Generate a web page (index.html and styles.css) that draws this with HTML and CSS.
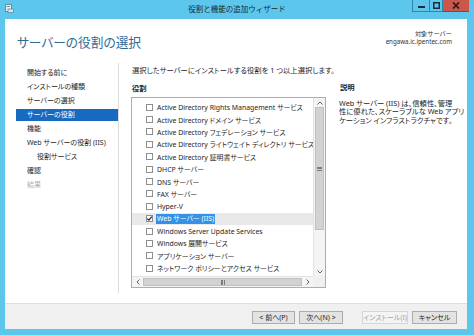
FILE: index.html
```
<!doctype html>
<html lang="ja">
<head>
  <meta charset="utf-8">
  <title>役割と機能の追加ウィザード</title>
  <link rel="stylesheet" href="styles.css">
</head>
<body>
  <div class="window">
    <div class="titlebar">
      <div class="tb-left">
        <svg class="app-icon" width="9" height="9" viewBox="0 0 9 9">
          <rect x="0.5" y="0.5" width="6" height="7" fill="#e8f4fb" stroke="#6f8796"/>
          <rect x="3" y="5" width="5.5" height="3.5" fill="#d6e6f0" stroke="#6f8796" stroke-width="0.8"/>
          <line x1="1.5" y1="2.5" x2="5" y2="2.5" stroke="#6f8796"/>
        </svg>
      </div>
      <div class="tb-title">役割と機能の追加ウィザード</div>
      <div class="tb-controls">
        <span class="tb-btn tb-min"><svg width="7" height="7" viewBox="0 0 7 7"><rect x="0" y="4" width="7" height="2" fill="#1d2b33"/></svg></span>
        <span class="tb-btn tb-max"><svg width="7" height="7" viewBox="0 0 7 7"><rect x="0.75" y="0.75" width="5.5" height="5.5" fill="none" stroke="#1d2b33" stroke-width="1.5"/></svg></span>
        <span class="tb-btn tb-close"><svg width="8" height="7" viewBox="0 0 8 7"><path d="M1 0.5 L7 6.5 M7 0.5 L1 6.5" stroke="#2a1414" stroke-width="1.6"/></svg></span>
      </div>
    </div>

    <div class="client">
      <div class="header">
        <h1>サーバーの役割の選択</h1>
        <div class="target">
          <div>対象サーバー</div>
          <div>engawa.ic.ipentec.com</div>
        </div>
      </div>

      <div class="main">
        <ul class="nav">
          <li>開始する前に</li>
          <li>インストールの種類</li>
          <li>サーバーの選択</li>
          <li class="active">サーバーの役割</li>
          <li>機能</li>
          <li>Web サーバーの役割 (IIS)</li>
          <li class="sub">役割サービス</li>
          <li>確認</li>
          <li class="disabled">結果</li>
        </ul>

        <div class="content">
          <p class="intro">選択したサーバーにインストールする役割を 1 つ以上選択します。</p>
          <div class="label">役割</div>
          <div class="listbox">
            <div class="items">
              <div class="row"><span class="cb"></span><span class="txt">Active Directory Rights Management サービス</span></div>
              <div class="row"><span class="cb"></span><span class="txt">Active Directory ドメイン サービス</span></div>
              <div class="row"><span class="cb"></span><span class="txt">Active Directory フェデレーション サービス</span></div>
              <div class="row"><span class="cb"></span><span class="txt">Active Directory ライトウェイト ディレクトリ サービス</span></div>
              <div class="row"><span class="cb"></span><span class="txt">Active Directory 証明書サービス</span></div>
              <div class="row"><span class="cb"></span><span class="txt">DHCP サーバー</span></div>
              <div class="row"><span class="cb"></span><span class="txt">DNS サーバー</span></div>
              <div class="row"><span class="cb"></span><span class="txt">FAX サーバー</span></div>
              <div class="row"><span class="cb"></span><span class="txt">Hyper-V</span></div>
              <div class="row selected"><span class="cb checked"><svg width="7" height="7" viewBox="0 0 7 7"><path d="M1.2 3.6 L2.9 5.2 L5.8 1.6" fill="none" stroke="#222" stroke-width="1.2"/></svg></span><span class="txt">Web サーバー (IIS)</span></div>
              <div class="row"><span class="cb"></span><span class="txt">Windows Server Update Services</span></div>
              <div class="row"><span class="cb"></span><span class="txt">Windows 展開サービス</span></div>
              <div class="row"><span class="cb"></span><span class="txt">アプリケーション サーバー</span></div>
              <div class="row"><span class="cb"></span><span class="txt">ネットワーク ポリシーとアクセス サービス</span></div>
              <div class="row partial"><span class="expander">▸</span><span class="cb mixed"></span><span class="txt">ファイル サービスおよびストレージ サービス (2/12 個をインストール済み)</span></div>
            </div>
            <div class="vscroll">
              <span class="arrow"><svg width="6" height="4" viewBox="0 0 6 4"><path d="M0.5 3.5 L3 1 L5.5 3.5" fill="none" stroke="#606060"/></svg></span>
              <span class="vthumb"><span class="grip-h"></span></span>
              <span class="track"></span>
              <span class="arrow"><svg width="6" height="4" viewBox="0 0 6 4"><path d="M0.5 0.5 L3 3 L5.5 0.5" fill="none" stroke="#606060"/></svg></span>
            </div>
            <div class="hscroll">
              <span class="arrow"><svg width="4" height="6" viewBox="0 0 4 6"><path d="M3.5 0.5 L1 3 L3.5 5.5" fill="none" stroke="#606060"/></svg></span>
              <span class="hthumb"><span class="grip-v"></span></span>
              <span class="arrow"><svg width="4" height="6" viewBox="0 0 4 6"><path d="M0.5 0.5 L3 3 L0.5 5.5" fill="none" stroke="#606060"/></svg></span>
            </div>
            <div class="corner"></div>
          </div>
        </div>

        <div class="desc">
          <div class="label">説明</div>
          <p>Web サーバー (IIS) は、信頼性、管理<br>性に優れた、スケーラブルな Web アプリ<br>ケーション インフラストラクチャです。</p>
        </div>
      </div>

      <div class="footer">
        <button>&lt; 前へ(P)</button>
        <button>次へ(N) &gt;</button>
        <button class="install" disabled>インストール(I)</button>
        <button>キャンセル</button>
      </div>
    </div>
  </div>
</body>
</html>
```

FILE: styles.css
```
html,body{margin:0;padding:0}
body{width:474px;height:335px;overflow:hidden;background:#5cc6ec;font-family:"Noto Sans","Noto Sans CJK JP",sans-serif;font-size:7.3px;color:#1e1e1e}
.window{display:flex;flex-direction:column;height:335px}

.titlebar{height:19px;display:grid;grid-template-columns:1fr auto 1fr;align-items:start}
.tb-left{padding:4px 0 0 5px;height:15px}
.app-icon{display:block}
.tb-title{font-family:"Noto Sans CJK JP",sans-serif;font-size:7.5px;line-height:17px;color:#1b2a33}
.tb-controls{justify-self:end;display:flex;margin-right:5px}
.tb-btn{display:flex;align-items:center;justify-content:center;height:12px;box-sizing:border-box}
.tb-min{width:17px;border:1px solid #2f87ad;border-top:0;border-right:0}
.tb-max{width:14px;border:1px solid #2f87ad;border-top:0}
.tb-close{width:26px;background:#c9574a;border-bottom:1px solid #a23a2f}

.client{flex:1;margin:0 7px 6px 5px;background:#fff;display:flex;flex-direction:column}

.header{height:44px;display:flex;justify-content:space-between;align-items:flex-start}
.header h1{margin:14px 0 0 12px;font-family:"Noto Sans CJK JP",sans-serif;font-weight:400;font-size:12.7px;line-height:18px;color:#2e6a96;font-feature-settings:"palt"}
.target{margin:11px 15px 0 0;text-align:right;font-size:6.2px;line-height:8px;color:#333}

.main{height:230px;display:flex;margin-bottom:10px}
.nav{list-style:none;margin:0;padding:4px 0 0;width:113px;border-right:1px solid #dcdcdc;font-size:7px;font-feature-settings:"palt"}
.nav li{height:12px;line-height:12px;margin:0 0 2px 11px;padding-left:11px;white-space:nowrap}
.nav li.sub{padding-left:21px}
.nav li.active{background:#176ac0;color:#fff}
.nav li.disabled{color:#b0b0b0}

.content{padding:2px 0 0 12px;width:195px;font-feature-settings:"palt"}
.intro{margin:0 0 8px 1px;line-height:10px;white-space:nowrap}
.label{line-height:10px;font-weight:700;margin-left:1px}
.content .label{margin-bottom:4px}

.listbox{width:195px;height:191px;box-sizing:border-box;border:1px solid #abadb3;display:grid;grid-template-columns:181px 12px;grid-template-rows:178px 11px}
.items{overflow:hidden;padding-top:3px;font-size:6.9px}
.row{height:12.4px;display:flex;align-items:center;padding-left:14px;white-space:nowrap}
.row .cb{flex:none;width:7px;height:7px;box-sizing:border-box;border:1px solid #8e8f8f;background:#fff;display:flex;align-items:center;justify-content:center;margin-right:4px}
.row .cb svg{flex:none}
.row.selected{background:#e9e9e9}
.row.selected .txt{background:#3392e6;color:#fff;padding:0 1px;margin-left:-1px;line-height:10px}
.row.partial{padding-left:0;margin-top:-1px}
.expander{width:14px;font-size:5px;color:#777;text-align:center}
.cb.mixed::after{content:"";width:3px;height:3px;background:#555}

.vscroll{display:flex;flex-direction:column;background:#f4f4f4;border-left:1px solid #e2e2e2}
.vscroll .arrow{height:9px;display:flex;align-items:center;justify-content:center}
.vthumb{height:123px;margin:0 1px;background:#d2d2d2;border:1px solid #c0c0c0;box-sizing:border-box;display:flex;align-items:center;justify-content:center}
.grip-h{width:5px;height:4px;border-top:1px solid #7c7c7c;border-bottom:1px solid #7c7c7c;position:relative;box-sizing:border-box}
.grip-h::after{content:"";position:absolute;left:0;right:0;top:0.5px;border-top:1px solid #7c7c7c}
.vscroll .track{flex:1}

.hscroll{display:flex;background:#f4f4f4;border-top:1px solid #e2e2e2}
.hscroll .arrow{width:11px;display:flex;align-items:center;justify-content:center}
.hthumb{flex:1;margin:1px 0;background:#d2d2d2;border:1px solid #c0c0c0;display:flex;align-items:center;justify-content:center}
.grip-v{width:4px;height:5px;border-left:1px solid #7c7c7c;border-right:1px solid #7c7c7c;position:relative;box-sizing:border-box}
.grip-v::after{content:"";position:absolute;top:0;bottom:0;left:0.5px;border-left:1px solid #7c7c7c}
.corner{background:#f0f0f0}

.desc{padding:19px 0 0 13px;font-feature-settings:"palt"}
.desc p{margin:6.7px 0 0;line-height:8.7px;white-space:nowrap}

.footer{flex:1;border-top:1px solid #dfdfdf;background:#f0f0f0;display:flex;justify-content:flex-end;align-items:flex-start;padding:7px 10px 0 0;gap:4px}
.footer button{height:13px;padding:0;border:1px solid #acacac;background:#e3e3e3;font:inherit;font-size:7px;line-height:11px;color:#1e1e1e;width:44px;font-feature-settings:"palt"}
.footer button:first-child{width:43px}
.footer .install{margin-left:15px;width:46px;color:#a3a3a3;background:#f4f4f4;border-color:#d5d5d5}
.footer button:last-child{width:45px}
```
